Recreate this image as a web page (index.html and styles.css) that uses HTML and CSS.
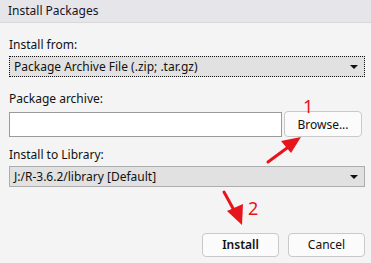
FILE: index.html
```html
<!DOCTYPE html>
<html>
<head>
<meta charset="utf-8">
<link rel="stylesheet" href="styles.css">
</head>
<body>
<div class="dialog">
  <div class="titlebar">Install Packages</div>
  <div class="content">
    <div class="label first">Install from:</div>
    <div class="select focused"><span>Package Archive File (.zip; .tar.gz)</span><span class="caret"></span></div>
    <div class="label second">Package archive:</div>
    <div class="row">
      <div class="input"></div>
      <div class="btn browse">Browse...</div>
    </div>
    <div class="label third">Install to Library:</div>
    <div class="select"><span>J:/R-3.6.2/library [Default]</span><span class="caret"></span></div>
    <div class="actions">
      <div class="btn action primary">Install</div>
      <div class="btn action">Cancel</div>
    </div>
  </div>
  <svg class="annot" width="371" height="263" viewBox="0 0 371 263">
    <line x1="268" y1="162" x2="287" y2="148" stroke="#e8141c" stroke-width="3" stroke-linecap="round"/>
    <polygon points="301,137 281,141 291,153" fill="#e8141c"/>
    <line x1="224" y1="192" x2="235" y2="212" stroke="#e8141c" stroke-width="3" stroke-linecap="round"/>
    <polygon points="242,225 227,211 243,204" fill="#e8141c"/>
    <text x="303" y="113" class="num">1</text>
    <text x="248" y="215" class="num">2</text>
  </svg>
</div>
</body>
</html>
```
FILE: styles.css
```css
html, body { margin: 0; padding: 0; }
body {
  width: 371px; height: 263px; overflow: hidden;
  background: #f3f4f3;
  font-family: "Noto Sans", "Open Sans", sans-serif;
  font-size: 12px;
  color: #111;
}
.dialog { position: relative; width: 371px; height: 263px; }
.titlebar {
  height: 23px;
  box-sizing: border-box;
  background: #e6e6ea;
  border-bottom: 1px solid #d8d8dc;
  padding-left: 8px;
  line-height: 22px;
  color: #141428;
}
.content { padding: 0 6px 0 9px; display: flex; flex-direction: column; }
.label { height: 16px; line-height: 16px; }
.label.first { margin-top: 14px; margin-bottom: 3px; }
.label.second { margin-top: 14px; margin-bottom: 4px; }
.label.third { margin-top: 10px; margin-bottom: 3px; }
.select {
  height: 21px;
  box-sizing: border-box;
  background: #e1e1e1;
  border: 1px solid #adadad;
  display: flex; align-items: center; justify-content: space-between;
  padding: 0 6px 0 4px;
  line-height: 19px;
}
.select.focused { border: 1px dotted #111; }
.caret {
  width: 0; height: 0;
  border-left: 4px solid transparent;
  border-right: 4px solid transparent;
  border-top: 4px solid #111;
}
.row { display: flex; gap: 2px; align-items: flex-start; }
.input {
  width: 273px; height: 25px; box-sizing: border-box;
  background: #fff; border: 1px solid #9a9a9a; margin-top: 1px;
}
.btn {
  box-sizing: border-box;
  background: #fbfbfb;
  border: 1px solid #c9c9c9;
  border-radius: 4px;
  display: flex; align-items: center; justify-content: center;
  line-height: 14px;
}
.browse { width: 78px; height: 26px; padding-top: 2px; }
.actions { display: flex; justify-content: flex-end; gap: 9px; margin-top: 46px; padding-right: 0; }
.action { width: 77px; height: 24px; }
.primary { font-weight: 600; }
.annot { position: absolute; left: 0; top: 0; pointer-events: none; }
.num { fill: #e8141c; font-family: "Noto Sans", sans-serif; font-size: 18px; }
```
